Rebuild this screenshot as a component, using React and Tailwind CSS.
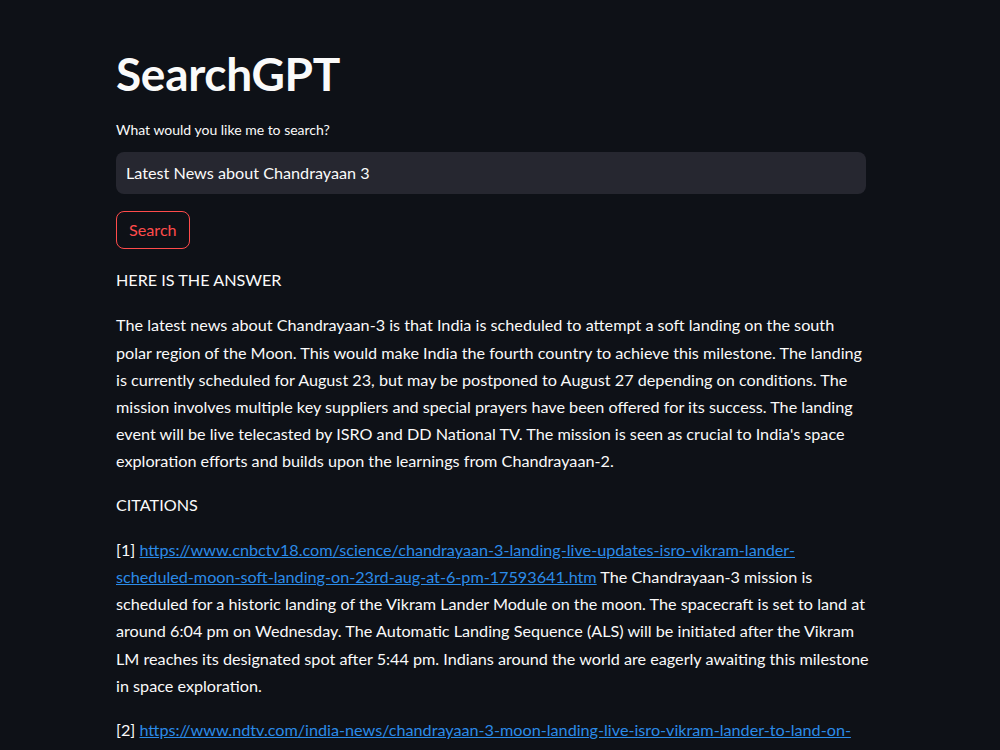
import React from "react";

const font = { fontFamily: "Lato, 'Noto Sans', sans-serif" };

export default function App() {
  return (
    <div className="bg-[#0e1117] h-[750px] overflow-hidden text-[#fafafa]" style={font}>
      <div className="w-[755px] ml-[116px] pt-[46px]">
        <h1 className="text-[46px] font-bold leading-[1.2] tracking-[-0.3px]">SearchGPT</h1>

        <label className="block mt-[19px] text-[14px] leading-[20px]">What would you like me to search?</label>
        <div className="mt-[12px] mr-[5px] h-[42px] rounded-[8px] bg-[#262730] flex items-center px-[10px] text-[16.2px]">
          Latest News about Chandrayaan 3
        </div>

        <button className="mt-[17px] h-[38px] px-[12px] rounded-[8px] border border-[#ff4b4b] text-[#ff4b4b] text-[16.2px] bg-transparent">
          Search
        </button>

        <div className="mt-[17px] text-[16.2px] leading-[27.2px] text-[#fafafa]">
          <p>HERE IS THE ANSWER</p>
          <p className="mt-[18px]">
            The latest news about Chandrayaan-3 is that India is scheduled to attempt a soft landing on the south
            polar region of the Moon. This would make India the fourth country to achieve this milestone. The landing
            is currently scheduled for August 23, but may be postponed to August 27 depending on conditions. The
            mission involves multiple key suppliers and special prayers have been offered for its success. The landing
            event will be live telecasted by ISRO and DD National TV. The mission is seen as crucial to India's space
            exploration efforts and builds upon the learnings from Chandrayaan-2.
          </p>
          <p className="mt-[16px]">CITATIONS</p>
          <p className="mt-[18px]">
            [1]{" "}
            <a className="text-[#2b8be8] underline" href="#">
              https://www.cnbctv18.com/science/chandrayaan-3-landing-live-updates-isro-vikram-lander-scheduled-moon-soft-landing-on-23rd-aug-at-6-pm-17593641.htm
            </a>{" "}
            The Chandrayaan-3 mission is scheduled for a historic landing of the Vikram Lander Module on the moon. The
            spacecraft is set to land at around 6:04 pm on Wednesday. The Automatic Landing Sequence (ALS) will be
            initiated after the Vikram LM reaches its designated spot after 5:44 pm. Indians around the world are
            eagerly awaiting this milestone in space exploration.
          </p>
          <p className="mt-[17px]">
            [2]{" "}
            <a className="text-[#2b8be8] underline" href="#">
              https://www.ndtv.com/india-news/chandrayaan-3-moon-landing-live-isro-vikram-lander-to-land-on-moon-today-4322344
            </a>
          </p>
        </div>
      </div>
    </div>
  );
}
